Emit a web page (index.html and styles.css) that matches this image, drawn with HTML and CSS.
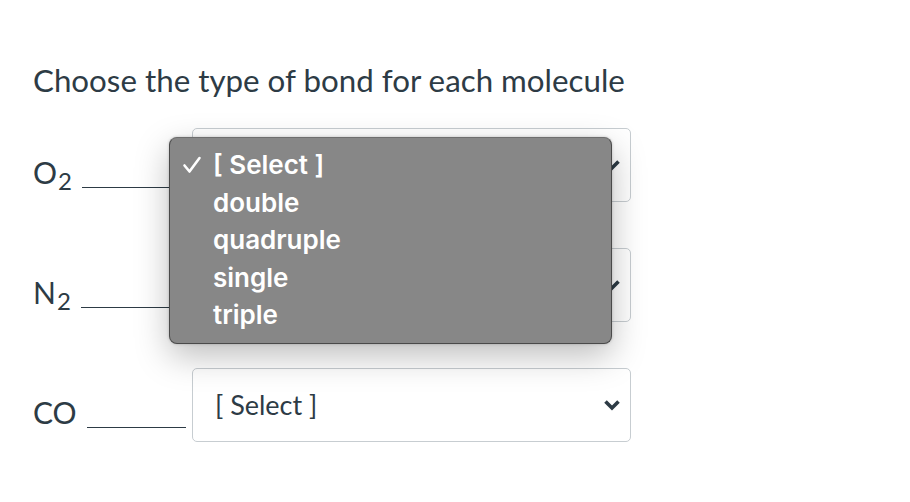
FILE: index.html
```html
<!DOCTYPE html>
<html>
<head>
<meta charset="utf-8">
<link rel="stylesheet" href="styles.css">
</head>
<body>
<div class="page">
  <h1 class="title">Choose the type of bond for each molecule</h1>
  <div class="rows">
    <div class="row">
      <div class="label"><span class="chem">O<sub class="sub">2</sub></span><span class="blank"></span></div>
      <div class="select"><span class="select-text">[ Select ]</span>
        <svg class="chev" viewBox="0 0 18 12" width="18" height="12"><path d="M2.5 2.5 L9 9 L15.5 2.5" fill="none" stroke="#2d3b45" stroke-width="3.6"/></svg>
      </div>
    </div>
    <div class="row">
      <div class="label"><span class="chem">N<sub class="sub">2</sub></span><span class="blank"></span></div>
      <div class="select"><span class="select-text">[ Select ]</span>
        <svg class="chev" viewBox="0 0 18 12" width="18" height="12"><path d="M2.5 2.5 L9 9 L15.5 2.5" fill="none" stroke="#2d3b45" stroke-width="3.6"/></svg>
      </div>
    </div>
    <div class="row">
      <div class="label"><span class="chem">CO</span><span class="blank"></span></div>
      <div class="select"><span class="select-text">[ Select ]</span>
        <svg class="chev" viewBox="0 0 18 12" width="18" height="12"><path d="M2.5 2.5 L9 9 L15.5 2.5" fill="none" stroke="#2d3b45" stroke-width="3.6"/></svg>
      </div>
    </div>
  </div>
  <div class="menu">
    <div class="opt"><svg class="check" viewBox="0 0 20 20" width="20" height="20"><path d="M2.5 10.5 L7.5 16.5 L17.5 3" fill="none" stroke="#fff" stroke-width="2.6" stroke-linecap="round" stroke-linejoin="round"/></svg>[ Select ]</div>
    <div class="opt">double</div>
    <div class="opt">quadruple</div>
    <div class="opt">single</div>
    <div class="opt">triple</div>
  </div>
</div>
</body>
</html>
```
FILE: styles.css
```css
html, body {
  margin: 0;
  padding: 0;
  background: #ffffff;
}
body {
  font-family: Lato, "Open Sans", sans-serif;
  color: #2d3b45;
}
.page {
  position: relative;
  width: 910px;
  height: 502px;
  padding-left: 33px;
  box-sizing: border-box;
}
.title {
  margin: 0;
  padding-top: 58px;
  font-size: 31.3px;
  font-weight: 400;
  line-height: 44px;
}
.rows {
  margin-top: 26px;
  display: flex;
  flex-direction: column;
  gap: 46px;
}
.row {
  display: flex;
  align-items: flex-start;
  height: 74px;
}
.label {
  width: 153px;
  margin-right: 6px;
  display: flex;
  align-items: flex-end;
  height: 62px;
  font-size: 30px;
  line-height: 36px;
}
.chem {
  white-space: nowrap;
}
.sub {
  font-size: 24px;
  vertical-align: -6px;
  line-height: 0;
  margin-left: 1px;
}
.blank {
  flex: 1;
  margin-left: 10px;
  border-bottom: 1.5px solid #2d3b45;
  margin-bottom: 2.5px;
}
.select {
  width: 439px;
  height: 74px;
  box-sizing: border-box;
  border: 1px solid #c7cdd1;
  border-radius: 5px;
  display: flex;
  align-items: center;
  justify-content: space-between;
  padding: 0 9px 0 22px;
  background: #fff;
}
.select-text {
  font-size: 27px;
  padding-bottom: 2px;
}
.chev {
  display: block;
}
.menu {
  position: absolute;
  left: 169px;
  top: 137px;
  width: 443px;
  height: 207px;
  box-sizing: border-box;
  background: #878787;
  border: 1px solid #4a4a4a;
  border-top-color: #6e6e6e;
  border-radius: 8px;
  box-shadow: 0 12px 34px rgba(0, 0, 0, 0.26), 0 0 3px rgba(0, 0, 0, 0.22);
  padding: 8px 0 0 43px;
  font-family: Inter, "Liberation Sans", sans-serif;
  font-weight: 600;
  font-size: 26px;
  line-height: 37.5px;
  color: #ffffff;
}
.opt {
  position: relative;
  white-space: nowrap;
}
.check {
  position: absolute;
  left: -31px;
  top: 9px;
}
```
